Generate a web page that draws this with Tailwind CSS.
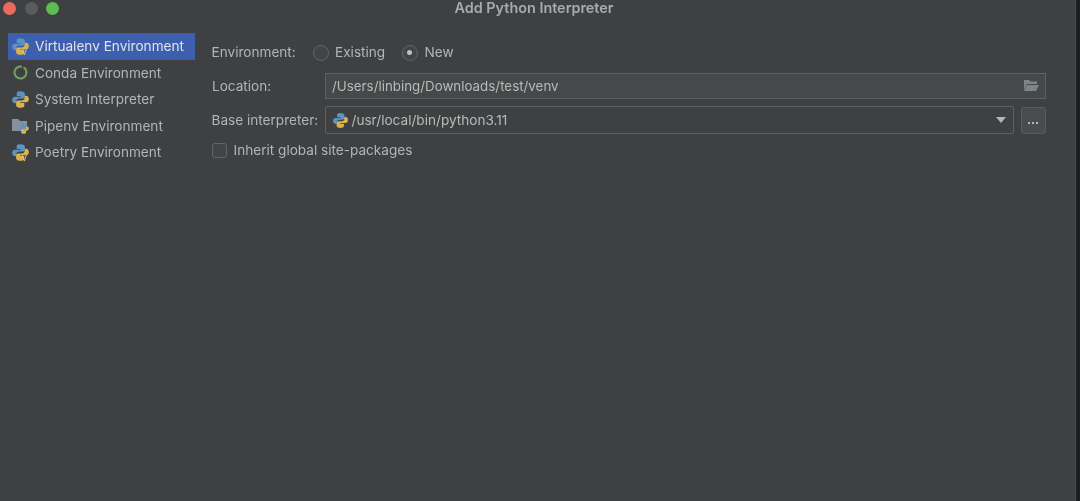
<!DOCTYPE html>
<html><head><meta charset="utf-8"><script src="https://cdn.jsdelivr.net/npm/@tailwindcss/browser@4"></script></head>
<body class="m-0 bg-[#3f4042]">
<svg width="0" height="0" class="absolute"><defs>
<g id="py"><path d="M7.800 1C5 1 4.800 2.200 4.800 3.200V5h3.300v.7H3.200C1.800 5.700 1 6.800 1 8.300c0 1.700.8 2.900 2.200 2.900h1.300V9.500c0-1.300 1.100-2.300 2.400-2.300h3c1 0 1.800-.8 1.800-1.800V3.200C11.700 2 10.500 1 7.800 1z" fill="#5a93c4"/><path d="M8.200 15c2.800 0 3-1.200 3-2.200V11H7.900v-.7h4.900c1.400 0 2.200-1.100 2.200-2.600 0-1.700-.8-2.900-2.200-2.900h-1.300v1.700c0 1.300-1.100 2.300-2.400 2.300h-3c-1 0-1.800.8-1.800 1.800v2.200C4.300 14 5.500 15 8.200 15z" fill="#d9b34e"/></g>
</defs></svg>
<div class="w-[1080px] h-[501px] overflow-hidden flex bg-[#1d1e20] blur-[0.4px] font-['Inter','Liberation_Sans',sans-serif]">
<div class="w-[1076px] h-full bg-[#3f4042] border-r border-[#4a4b4d] flex flex-col">
  <header class="relative h-[33px] shrink-0">
    <div class="flex gap-[8.500px] pl-[3px] pt-[2px]">
      <span class="w-[13px] h-[13px] rounded-full bg-[#ea6a60]"></span>
      <span class="w-[13px] h-[13px] rounded-full bg-[#5a5b5d]"></span>
      <span class="w-[13px] h-[13px] rounded-full bg-[#5cbd54]"></span>
    </div>
    <div class="absolute left-0 w-[1068px] top-0 text-center text-[14.400px] leading-[16px] font-semibold text-[#a9aaab]">Add Python Interpreter</div>
  </header>
  <div class="flex flex-1">
    <aside class="w-[195px] pl-[8px] shrink-0 text-[#b3b4b5] text-[13.600px]">
      <div class="h-[27px] flex items-center bg-[#3d5fae] text-[#dfe3ec] pl-[3px]">
        <svg class="w-[19px] h-[19px] mr-[5px]" viewBox="0 0 16 16"><use href="#py"/><text x="9" y="15.500" font-size="8" fill="#c9c9a0" font-family="Inter">v</text></svg>Virtualenv Environment</div>
      <div class="h-[26.400px] flex items-center pl-[3px]">
        <svg class="w-[19px] h-[19px] mr-[5px] -mt-[1px]" viewBox="0 0 19 19"><circle cx="9.500" cy="9.500" r="6" fill="none" stroke="#74a35a" stroke-width="2" stroke-dasharray="35 3" transform="rotate(-60 9.500 9.500)"/></svg>Conda Environment</div>
      <div class="h-[26.400px] flex items-center pl-[3px]">
        <svg class="w-[19px] h-[19px] mr-[5px]" viewBox="0 0 16 16"><use href="#py"/></svg>System Interpreter</div>
      <div class="h-[26.400px] flex items-center pl-[3px]">
        <svg class="w-[19px] h-[19px] mr-[5px]" viewBox="0 0 19 19"><path d="M1 3h6l2 2h7v10H1z" fill="#85919c"/><g transform="translate(7 7) scale(.72)"><use href="#py"/></g></svg>Pipenv Environment</div>
      <div class="h-[26.400px] flex items-center pl-[3px]">
        <svg class="w-[19px] h-[19px] mr-[5px]" viewBox="0 0 16 16"><use href="#py"/><text x="9" y="15.500" font-size="8" fill="#c9c9a0" font-family="Inter">v</text></svg>Poetry Environment</div>
    </aside>
    <main class="flex-1 pl-[17px] pr-[30px] text-[13.600px] text-[#b3b4b5]">
      <div class="h-[39px] flex items-center">
        <span class="w-[101px] -ml-[0.500px]">Environment:</span>
        <span class="w-[16px] h-[16px] rounded-full border border-[#646567] bg-[#424446]"></span>
        <span class="ml-[6.500px] w-[66.500px]">Existing</span>
        <span class="w-[16px] h-[16px] rounded-full border border-[#646567] bg-[#424446] flex items-center justify-center"><span class="w-[5px] h-[5px] rounded-full bg-[#c0c1c2]"></span></span>
        <span class="ml-[7px]">New</span>
      </div>
      <div class="flex items-center h-[27px]">
        <span class="w-[113px] -mb-[2px]">Location:</span>
        <div class="flex-1 h-[26px] border border-[#5e6062] bg-[#45494a] flex items-center pl-[6px] pr-[6px] text-[#b9baba]">
          <span class="flex-1 text-[13.350px] mt-[1px]">/Users/linbing/Downloads/test/venv</span>
          <svg width="16" height="13" viewBox="0 0 16 13"><path d="M1 1h5l1.500 1.500H14V5H4L1 11z" fill="#7b8786"/><path d="M4 6h12l-3 6H1z" fill="#7b8786"/></svg>
        </div>
      </div>
      <div class="flex items-center h-[28px] mt-[7px]">
        <span class="w-[113px] -ml-[0.500px] mt-[1px]">Base interpreter:</span>
        <div class="w-[689px] h-[28px] border border-[#5e6062] rounded-[2px] bg-[#3f4042] flex items-center pl-[6px] pr-[6px] text-[#b9baba]">
          <svg class="w-[17px] h-[17px] mr-[3px]" viewBox="0 0 16 16"><use href="#py"/></svg>
          <span class="flex-1">/usr/local/bin/python3.11</span>
          <span class="w-0 h-0 border-l-[5px] border-r-[5px] border-t-[6px] border-l-transparent border-r-transparent border-t-[#b5b6b7] mr-[1px]"></span>
        </div>
        <div class="ml-[7px] w-[25px] h-[27px] rounded-[3px] border border-[#5a5c5e] bg-[#494b4d] flex items-center justify-center gap-[2px] pt-[6px]">
          <span class="w-[2px] h-[2px] bg-[#b5b6b7]"></span><span class="w-[2px] h-[2px] bg-[#b5b6b7]"></span><span class="w-[2px] h-[2px] bg-[#b5b6b7]"></span>
        </div>
      </div>
      <div class="flex items-center h-[16px] mt-[8px] -ml-[0.500px]">
        <span class="w-[15px] h-[15px] rounded-[3px] border border-[#626466] bg-[#424446]"></span>
        <span class="ml-[7px]">Inherit global site-packages</span>
      </div>
    </main>
  </div>
</div>
</div>
</body></html>
